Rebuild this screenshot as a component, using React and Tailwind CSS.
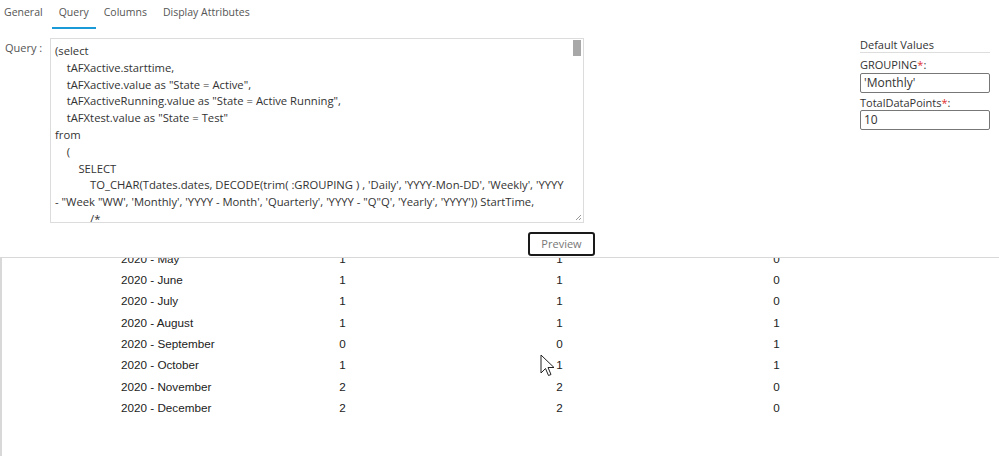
import React from "react";

const queryLines = [
  "(select",
  "    tAFXactive.starttime,",
  "    tAFXactive.value as \"State = Active\",",
  "    tAFXactiveRunning.value as \"State = Active Running\",",
  "    tAFXtest.value as \"State = Test\"",
  "from",
  "    (",
  "        SELECT",
  "            TO_CHAR(Tdates.dates, DECODE(trim( :GROUPING ) , 'Daily', 'YYYY-Mon-DD', 'Weekly', 'YYYY",
  "- \"Week \"WW', 'Monthly', 'YYYY - Month', 'Quarterly', 'YYYY - \"Q\"Q', 'Yearly', 'YYYY')) StartTime,",
  "            /*",
];

const rows = [
  ["2020 - May", 1, 1, 0],
  ["2020 - June", 1, 1, 0],
  ["2020 - July", 1, 1, 0],
  ["2020 - August", 1, 1, 1],
  ["2020 - September", 0, 0, 1],
  ["2020 - October", 1, 1, 1],
  ["2020 - November", 2, 2, 0],
  ["2020 - December", 2, 2, 0],
];

function Tabs() {
  const tabs = ["General", "Query", "Columns", "Display Attributes"];
  return (
    <div className="flex h-[30px] items-start pl-[4px] text-[10.5px] text-[#555]">
      {tabs.map((t) => (
        <div
          key={t}
          className={
            t === "Query"
              ? "mr-[8px] h-[29px] border-b-2 border-[#1a9ad6] px-[7px] pt-[5px] -ml-[7px]"
              : "mr-[16px] pt-[5px]"
          }
        >
          {t}
        </div>
      ))}
    </div>
  );
}

function QueryBox() {
  return (
    <div className="relative h-[185px] w-[534px] overflow-hidden border border-[#dcdcdc] bg-white pl-[4px] pt-[4px] text-[11.25px] leading-[16.8px] text-[#333]">
      {queryLines.map((l, i) => (
        <div key={i} className="whitespace-pre">
          {l}
        </div>
      ))}
      <div className="absolute right-[1px] top-0 h-full w-[10px] bg-white" />
      <div className="absolute right-[2px] top-[1px] h-[16px] w-[8px] bg-[#a8a8a8]" />
      <svg className="absolute bottom-[1px] right-[1px]" width="8" height="8" viewBox="0 0 8 8">
        <path d="M7 2 L2 7 M7 5 L5 7" stroke="#999" strokeWidth="1" />
      </svg>
    </div>
  );
}

function DefaultValues() {
  return (
    <div className="-mt-[1px] w-[130px] text-[11px] text-[#333]">
      <div className="border-b border-[#ddd] leading-[15px]">Default Values</div>
      <div className="mt-[6px] leading-[12px]">
        GROUPING<span className="text-[#e03030]">*</span>:
      </div>
      <div className="mt-[2px] h-[20px] rounded-[2px] border border-[#777] px-[3px] text-[12px] leading-[18px] text-[#333]">
        'Monthly'
      </div>
      <div className="mt-[4px] leading-[12px]">
        TotalDataPoints<span className="text-[#e03030]">*</span>:
      </div>
      <div className="mt-[1px] h-[20px] rounded-[2px] border border-[#777] px-[3px] text-[12px] leading-[18px] text-[#333]">
        10
      </div>
    </div>
  );
}

export default function App() {
  return (
    <div
      className="relative h-[456px] w-[999px] overflow-hidden bg-white"
      style={{ fontFamily: '"Open Sans", "Noto Sans", sans-serif' }}
    >
      <Tabs />
      <div className="flex pt-[8px]">
        <div className="w-[50px] pl-[5px] pt-[2px] text-[11px] text-[#555]">Query :</div>
        <QueryBox />
        <div className="ml-[276px]">
          <DefaultValues />
        </div>
      </div>
      <div className="flex justify-start pl-[528px] pt-[9px]">
        <button className="h-[24px] w-[67px] rounded-[3px] border-2 border-[#1a1a1a] bg-white text-[11px] text-[#777]">
          Preview
        </button>
      </div>
      <div className="mt-[1px] h-[200px] overflow-hidden border-l-2 border-t border-[#d8d8d8]">
        <div
          className="-mt-[10px] pl-[119px] text-[11.7px] text-[#222]"
          style={{ fontFamily: '"Liberation Sans", Arial, sans-serif' }}
        >
          {rows.map((r) => (
            <div key={r[0]} className="grid h-[21.3px] grid-cols-[113px_217px_217px_217px] items-center">
              <div className="whitespace-nowrap">{r[0]}</div>
              <div className="text-center">{r[1]}</div>
              <div className="text-center">{r[2]}</div>
              <div className="text-center">{r[3]}</div>
            </div>
          ))}
        </div>
      </div>
      <svg className="absolute left-[540px] top-[354px]" width="18" height="26" viewBox="0 0 18 26">
        <path
          d="M1 1 L1 19 L5.5 14.5 L8.5 21.5 L11 20.5 L8 13.5 L14 13.5 Z"
          fill="white"
          stroke="#222"
          strokeWidth="1"
          strokeLinejoin="round"
        />
      </svg>
    </div>
  );
}
